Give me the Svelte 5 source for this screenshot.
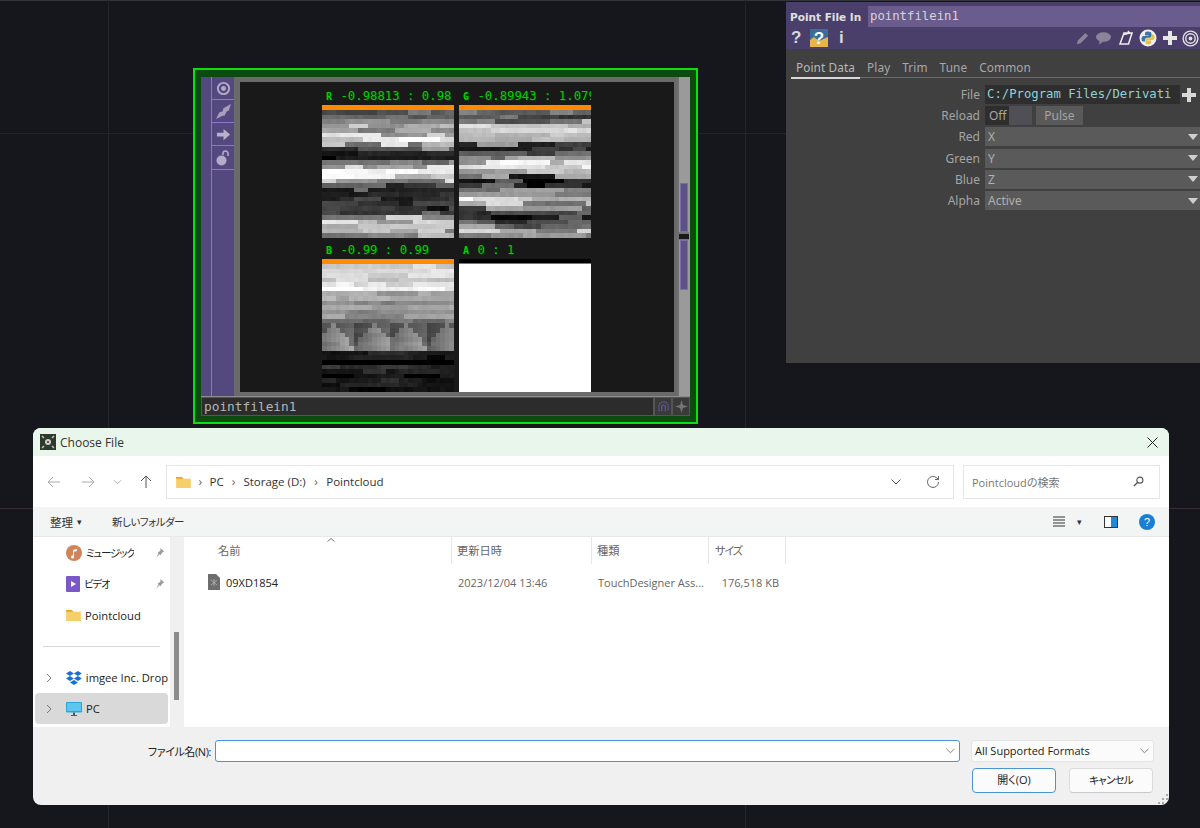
<script>
  function rng(seed) {
    let s = seed;
    return () => {
      s = (s * 1664525 + 1013904223) % 4294967296;
      return s / 4294967296;
    };
  }
  const profiles = {
    r: [85,105,140,205,130,150,235,190,70,50,15,115,140,235,245,165,110,30,35,55,70,30,70,130,210,180,200,130],
    g: [110,70,120,190,210,170,190,50,30,90,140,225,245,170,110,15,40,110,160,230,190,110,60,30,100,80,200,140],
    b: [215,230,215,205,225,245,165,170,140,165,135,150,115,90,110,115,105,120,70,32,22,8,40,38,12,30,20,10]
  };
  const shifts = [-1, 0, 0, 0, 1];
  function cells(key, seed) {
    const p = profiles[key];
    const r = rng(seed);
    const out = [];
    for (let y = 0; y < p.length; y++) {
      let x = 0;
      const amp = key === 'b' ? 20 : 24;
      while (x < 29) {
        const len = 3 + Math.floor(r() * 7);
        const jitter = (r() - 0.5) * 2 * amp;
        const shift = key === 'b' ? 0 : shifts[Math.floor(r() * shifts.length)];
        const idx = Math.max(0, Math.min(p.length - 1, y + shift));
        for (let i = 0; i < len && x < 29; i++, x++) {
          let v = p[idx] * 0.75 + p[y] * 0.25 + jitter + (r() - 0.5) * 10;
          if (key === 'b' && y > 12 && y < 19) {
            const m = (x + 2 + (x > 14 ? 2 : 0)) % 9;
            const inside = Math.abs(m - 4) <= (y - 12) * 0.75;
            v = (inside ? 100 + m * 8 : 72 + m * 4) + jitter * 0.4;
          }
          v = Math.max(0, Math.min(255, Math.round(v)));
          out.push({ x, y, fill: `rgb(${v},${v},${v})` });
        }
      }
    }
    return out;
  }
  const tiles = [
    { label: 'R', range: '-0.98813 : 0.98', cells: cells('r', 11) },
    { label: 'G', range: '-0.89943 : 1.079', cells: cells('g', 29) },
    { label: 'B', range: '-0.99 : 0.99', cells: cells('b', 53) },
    { label: 'A', range: '0 : 1', cells: null }
  ];
  const params = [
    ['Red', 'X'], ['Green', 'Y'], ['Blue', 'Z'], ['Alpha', 'Active']
  ];
</script>

<div class="desk">
  <div class="line h0"></div>
  <div class="line h1"></div>
  <div class="line h2"></div>
  <div class="line v1"></div>
  <div class="line v2"></div>

  <section class="node">
    <div class="node-body">
      <aside class="side">
        <div class="side-strip"></div>
        <div class="side-btns">
          <button class="sb"><svg viewBox="0 0 16 16" width="15" height="15"><circle cx="8" cy="8" r="6" fill="none" stroke="#b3abc9" stroke-width="2"/><circle cx="8" cy="8" r="2.6" fill="#b3abc9"/></svg></button>
          <button class="sb"><svg viewBox="0 0 16 16" width="17" height="17"><path d="M15 1 L8 5 L7 8 L4 9 L1 15 L7 12 L9 12 L11 8 L13 7Z" fill="#a79fbd"/></svg></button>
          <button class="sb"><svg viewBox="0 0 16 16" width="15" height="15"><path d="M1 6h7V2l7 6-7 6v-4H1z" fill="#b8b2c9"/></svg></button>
          <button class="sb last"><svg viewBox="0 0 16 16" width="16" height="16"><circle cx="6.5" cy="10.5" r="5" fill="#b3abc9"/><path d="M8 5V3.5a2.5 2.5 0 0 1 5 0V6" fill="none" stroke="#b3abc9" stroke-width="1.6"/></svg></button>
        </div>
      </aside>
      <div class="viewer">
        <div class="tiles">
          {#each tiles as t}
            <div class="tile">
              <div class="tile-label"><b>{t.label}</b> {t.range}</div>
              {#if t.cells}
                <div class="bar"></div>
                <svg class="heat" viewBox="0 0 29 28" preserveAspectRatio="none" shape-rendering="crispEdges">
                  {#each t.cells as c}<rect x={c.x} y={c.y} width="1.02" height="1.02" fill={c.fill}/>{/each}
                </svg>
              {:else}
                <div class="bar black"></div>
                <div class="white"></div>
              {/if}
            </div>
          {/each}
        </div>
      </div>
      <div class="scroll">
        <div class="s-top"></div>
        <div class="s-thumb t1"></div>
        <div class="s-sep"></div>
        <div class="s-thumb t2"></div>
      </div>
    </div>
    <div class="node-foot">
      <div class="node-name">pointfilein1</div>
      <div class="foot-btn"><svg viewBox="0 0 12 12" width="11" height="11"><path d="M1 11V6a5 5 0 0 1 10 0v5" fill="none" stroke="#5d5490" stroke-width="2" stroke-dasharray="1.5 1"/><path d="M4 11V6.500a2 2 0 0 1 4 0V11" fill="none" stroke="#5d5490" stroke-width="1.5"/></svg></div>
      <div class="foot-btn"><svg viewBox="0 0 14 14" width="13" height="13"><path d="M7 0l1.500 5.500L14 7l-5.500 1.500L7 14l-1.500-5.500L0 7l5.500-1.500z" fill="#757575"/></svg></div>
    </div>
  </section>

  <section class="panel">
    <header class="p-head">
      <div class="p-title">
        <span class="p-type">Point File In</span>
        <span class="p-name">pointfilein1</span>
      </div>
      <div class="p-icons">
        <span class="q">?</span>
        <svg class="qq" viewBox="0 0 18 18" width="18" height="18"><rect width="18" height="18" fill="#3c6d96"/><path d="M0 11l4-3 5 4 9-4v10H0z" fill="#e8b44c"/><text x="9" y="15" text-anchor="middle" font-size="17" font-weight="700" font-family="Liberation Sans" fill="#fff">?</text></svg>
        <span class="q i">i</span>
        <span class="grow"></span>
        <svg viewBox="0 0 16 16" width="15" height="15"><path d="M2 14l1-4 8-8 3 3-8 8z" fill="#8d8398"/></svg>
        <svg viewBox="0 0 18 14" width="17" height="14"><ellipse cx="9" cy="6" rx="8" ry="5" fill="#8d8398"/><path d="M5 10l-1 4 5-3z" fill="#8d8398"/></svg>
        <svg viewBox="0 0 16 16" width="16" height="16"><path d="M6 3h8L10.500 14H2z" fill="none" stroke="#f0f0f0" stroke-width="1.500"/><path d="M6 4.500l5.500-1.500L10 1" fill="none" stroke="#f0f0f0" stroke-width="1.500"/></svg>
        <svg viewBox="0 0 18 18" width="18" height="18"><circle cx="9" cy="9" r="8.500" fill="#f0f0f0"/><path d="M9 2.500c-3 0-3 1.300-3 2.500v1.500h3.500V7H4.500C3 7 2.500 8.500 2.500 10s.5 2.500 2 2.500H6V11c0-1.300 1-2.300 2.300-2.300h2.500c1 0 1.700-.8 1.700-1.700V4.700C12.500 3.300 11 2.500 9 2.500z" fill="#3a76a8"/><path d="M9 15.500c3 0 3-1.300 3-2.500v-1.500H8.500V11H13.500c1.500 0 2-1.500 2-3s-.5-2.500-2-2.500H13V7c0 1.300-1 2.300-2.300 2.300H8.200c-1 0-1.700.8-1.700 1.700v2.300c0 1.400 1.500 2.200 2.500 2.200z" fill="#e8c23e"/></svg>
        <svg viewBox="0 0 14 14" width="14" height="14"><path d="M5 0h4v5h5v4H9v5H5V9H0V5h5z" fill="#e6e6e6"/></svg>
        <svg viewBox="0 0 18 18" width="17" height="17"><circle cx="9" cy="9" r="7.800" fill="none" stroke="#e0e0e0" stroke-width="1.500"/><circle cx="9" cy="9" r="5" fill="none" stroke="#e0e0e0" stroke-width="1.500"/><circle cx="9" cy="9" r="2" fill="#e0e0e0"/></svg>
      </div>
    </header>
    <nav class="tabs">
      <span class="tab active">Point Data</span>
      <span class="tab">Play</span>
      <span class="tab">Trim</span>
      <span class="tab">Tune</span>
      <span class="tab">Common</span>
    </nav>
    <div class="form">
      <div class="row">
        <label>File</label>
        <div class="file-val">C:/Program Files/Derivati</div>
        <svg class="plus" viewBox="0 0 14 14" width="14" height="14"><path d="M5 0h4v5h5v4H9v5H5V9H0V5h5z" fill="#d8d8d8"/></svg>
      </div>
      <div class="row">
        <label>Reload</label>
        <div class="off">Off</div>
        <div class="swatch"></div>
        <div class="pulse">Pulse</div>
      </div>
      {#each params as p}
        <div class="row">
          <label>{p[0]}</label>
          <div class="sel"><span>{p[1]}</span><svg viewBox="0 0 10 6" width="10" height="6"><path d="M0 0h10L5 6z" fill="#cfcfcf"/></svg></div>
        </div>
      {/each}
    </div>
  </section>

  <section class="dialog">
    <div class="d-title">
      <svg viewBox="0 0 16 16" width="16" height="16"><rect width="16" height="16" fill="#2e3a2a"/><circle cx="8" cy="8" r="3" fill="#cfcfcf"/><circle cx="8" cy="8" r="1" fill="#333"/><path d="M2 2l2 2M14 2l-2 2M2 14l2-2M14 14l-2-2" stroke="#bfc7b8" stroke-width="1.500"/></svg>
      <span class="d-title-t">Choose File</span>
      <span class="grow"></span>
      <svg class="x" viewBox="0 0 11 11" width="11" height="11"><path d="M.5.500l10 10M10.500.500l-10 10" stroke="#222" stroke-width="1"/></svg>
    </div>
    <div class="d-nav">
      <div class="nav-btns">
        <svg viewBox="0 0 14 12" width="14" height="12"><path d="M13 6H1M6 1L1 6l5 5" fill="none" stroke="#aaa" stroke-width="1"/></svg>
        <svg viewBox="0 0 14 12" width="14" height="12"><path d="M1 6h12M8 1l5 5-5 5" fill="none" stroke="#aaa" stroke-width="1"/></svg>
        <svg class="nd" viewBox="0 0 10 6" width="9" height="6"><path d="M1 1l4 4 4-4" fill="none" stroke="#aaa" stroke-width="1"/></svg>
        <svg class="nu" viewBox="0 0 12 14" width="12" height="14"><path d="M6 13V1M1 6l5-5 5 5" fill="none" stroke="#555" stroke-width="1"/></svg>
      </div>
      <div class="addr">
        <svg viewBox="0 0 16 13" width="15" height="12"><path d="M0 1h6l2 2h8v10H0z" fill="#f7cf6a"/><path d="M0 1h6l2 2H0z" fill="#eaa520"/></svg>
        <span class="crumb-s first">›</span><span>PC</span><span class="crumb-s second">›</span><span>Storage (D:)</span><span class="crumb-s">›</span><span>Pointcloud</span>
        <span class="grow"></span>
        <svg class="ac" viewBox="0 0 10 6" width="10" height="6"><path d="M.5.500L5 5 9.500.500" fill="none" stroke="#555" stroke-width="1"/></svg>
        <svg class="rf" viewBox="0 0 14 14" width="14" height="14"><path d="M12.500 7a5.500 5.500 0 1 1-1.600-3.900L12.500 4.500M12.500 1v3.500H9" fill="none" stroke="#666" stroke-width="1"/></svg>
      </div>
      <div class="search">
        <span>Pointcloudの検索</span>
        <span class="grow"></span>
        <svg viewBox="0 0 12 12" width="11" height="11"><circle cx="7.500" cy="4.500" r="3.300" fill="none" stroke="#555" stroke-width="1.200"/><path d="M5 7l-4 4" stroke="#555" stroke-width="1.500"/></svg>
      </div>
    </div>
    <div class="d-tools">
      <span class="t-org">整理</span><span class="caret">▾</span>
      <span class="t-new">新しいフォルダー</span>
      <span class="grow"></span>
      <svg viewBox="0 0 12 11" width="12" height="11"><path d="M0 1h12M0 4h12M0 7h12M0 10h12" stroke="#333" stroke-width="1"/></svg>
      <span class="caret c2">▾</span>
      <svg class="pv" viewBox="0 0 14 12" width="14" height="12"><rect x=".5" y=".5" width="13" height="11" fill="#fff" stroke="#333"/><rect x="7" y="1" width="6" height="10" fill="#1f8ad6"/></svg>
      <svg class="hp" viewBox="0 0 16 16" width="16" height="16"><circle cx="8" cy="8" r="8" fill="#1a7fd4"/><text x="8" y="12" text-anchor="middle" font-size="11" font-family="Liberation Sans" fill="#fff">?</text></svg>
    </div>
    <div class="d-main">
      <aside class="tree">
        <div class="t-row">
          <svg viewBox="0 0 16 16" width="16" height="16"><circle cx="8" cy="8" r="8" fill="#d0845a"/><path d="M7 12V5l4-1v2l-3 .8V12a1.500 1.500 0 1 1-1-1.400z" fill="#fff"/></svg>
          <span class="t-l kana">ミュージック</span>
          <svg class="pin" viewBox="0 0 12 12" width="11" height="11"><path d="M7 1l4 4-2 1-2 3-1-1-4 4 3-5-1-1 3-2z" fill="#9a9a9a"/></svg>
        </div>
        <div class="t-row">
          <svg viewBox="0 0 14 16" width="14" height="16"><rect width="14" height="16" rx="1" fill="#7a58c8"/><path d="M5 5l5 3-5 3z" fill="#fff"/></svg>
          <span class="t-l kana">ビデオ</span>
          <svg class="pin" viewBox="0 0 12 12" width="11" height="11"><path d="M7 1l4 4-2 1-2 3-1-1-4 4 3-5-1-1 3-2z" fill="#9a9a9a"/></svg>
        </div>
        <div class="t-row tall">
          <svg viewBox="0 0 16 13" width="15" height="12"><path d="M0 1h6l2 2h8v10H0z" fill="#f7cf6a"/><path d="M0 1h6l2 2H0z" fill="#eaa520"/></svg>
          <span class="t-l">Pointcloud</span>
        </div>
        <div class="t-div"></div>
        <div class="t-row exp">
          <svg class="chev" viewBox="0 0 6 10" width="6" height="10"><path d="M1 1l4 4-4 4" fill="none" stroke="#777"/></svg>
          <svg viewBox="0 0 16 14" width="16" height="14"><path d="M4 0l4 2.500L4 5 0 2.500zM12 0l4 2.500L12 5 8 2.500zM4 5l4 2.500L4 10 0 7.500zM12 5l4 2.500L12 10 8 7.500zM8 9l4 2.500L8 14l-4-2.500z" fill="#1a70d0"/></svg>
          <span class="t-l clip">imgee Inc. Drop</span>
        </div>
        <div class="t-row exp sel-row">
          <svg class="chev" viewBox="0 0 6 10" width="6" height="10"><path d="M1 1l4 4-4 4" fill="none" stroke="#777"/></svg>
          <svg viewBox="0 0 16 14" width="16" height="14"><rect width="16" height="10.500" rx="1" fill="#2aa5dc"/><rect x="1" y="1" width="14" height="8" fill="#5cc6ee"/><path d="M5 14h6v-1H9v-2.500H7V13H5z" fill="#4a5a6a"/></svg>
          <span class="t-l">PC</span>
        </div>
      </aside>
      <div class="vs"><div class="vs-t"></div></div>
      <div class="files">
        <div class="f-head">
          <span class="c1">名前<svg class="sort" viewBox="0 0 8 4" width="8" height="4"><path d="M.5 3.500L4 .5l3.500 3" fill="none" stroke="#777"/></svg></span>
          <span class="c2h">更新日時</span>
          <span class="c2h">種類</span>
          <span class="c2h sz">サイズ</span>
        </div>
        <div class="f-row">
          <span class="fn"><svg viewBox="0 0 12 16" width="12" height="16"><path d="M0 0h8l4 4v12H0z" fill="#6e6e6e"/><path d="M3 6l6 5M9 6l-6 5M6 5v7" stroke="#b5b5b5" stroke-width=".8"/></svg>09XD1854</span>
          <span>2023/12/04 13:46</span>
          <span>TouchDesigner Ass...</span>
          <span class="fs">176,518 KB</span>
        </div>
      </div>
    </div>
    <div class="d-foot">
      <div class="fl1">
        <span class="fl-lab">ファイル名(N):</span>
        <div class="fl-in"><svg viewBox="0 0 10 6" width="9" height="6"><path d="M.5.500L5 5 9.500.500" fill="none" stroke="#777"/></svg></div>
        <div class="fl-cb"><span>All Supported Formats</span><svg viewBox="0 0 10 6" width="9" height="6"><path d="M.5.500L5 5 9.500.500" fill="none" stroke="#777"/></svg></div>
      </div>
      <div class="fl2">
        <div class="btn prim">開く(O)</div>
        <div class="btn cancel">キャンセル</div>
      </div>
      <svg class="grip" viewBox="0 0 10 10" width="10" height="10"><path d="M8 0h2v2H8zM4 4h2v2H4zM8 4h2v2H8zM0 8h2v2H0zM4 8h2v2H4zM8 8h2v2H8z" fill="#aaa"/></svg>
    </div>
  </section>
</div>

<style>
  :global(body) { margin: 0; background: #16171c; }
  .desk { position: relative; width: 1200px; height: 828px; overflow: hidden; background: #16171c; font-family: "Open Sans", "Noto Sans CJK JP", sans-serif; }
  .line { position: absolute; background: #24252b; }
  .h0 { left: 0; right: 0; top: 0; height: 1px; background: #33343a; }
  .h1 { left: 0; right: 0; top: 133px; height: 1px; }
  .h2 { left: 0; right: 0; top: 508px; height: 1px; background: #3a2a3a; }
  .v1 { left: 108px; top: 0; bottom: 0; width: 1px; }
  .v2 { left: 745px; top: 0; bottom: 0; width: 1px; }
  .grow { flex: 1; }
  button { all: unset; box-sizing: border-box; }

  .node { position: absolute; left: 193px; top: 68px; width: 505px; height: 356px; box-sizing: border-box; border: 2px solid #0fdc12; background: #0c4a10; padding: 7px 6px 6px 6px; display: flex; flex-direction: column; }
  .node-body { flex: 1; display: flex; min-height: 0; }
  .side { width: 33px; display: flex; background: #54497f; }
  .side-strip { width: 10px; border-right: 1px solid #8a78cc; }
  .side-btns { flex: 1; display: flex; flex-direction: column; }
  .sb { height: 23px; width: 22px; display: flex; align-items: center; justify-content: center; border-bottom: 1px solid #8a78cc; }
  .sb.last { height: 24px; }
  .viewer { flex: 1; background: #191919; border: solid #6a6a6a; border-width: 5px 3px 4px 6px; box-sizing: border-box; overflow: hidden; }
  .tiles { margin-left: 82px; width: 269px; display: grid; grid-template-columns: 132px 132px; column-gap: 5px; row-gap: 0; padding-top: 5px; }
  .tile { height: 153.500px; display: flex; flex-direction: column; overflow: hidden; }
  .tile-label { height: 18px; font: 12.300px/19px "DejaVu Sans Mono", monospace; color: #00d000; text-shadow: 1px 1px 0 #0a3a0a; padding-left: 4px; white-space: nowrap; overflow: hidden; }
  .tile-label b { font-size: 10px; margin-right: 1px; }
  .bar { height: 5px; background: #ff8a00; flex: none; }
  .bar.black { background: #000; border-bottom: 1px solid #777; height: 5px; box-sizing: border-box; }
  .heat { display: block; width: 132px; height: 128px; flex: none; }
  .white { background: #fff; flex: 1; }
  .scroll { width: 13px; background: #9a9a9a; border-left: 2px solid #6f6f6f; box-sizing: border-box; display: flex; flex-direction: column; padding: 0 2px 0 1px; }
  .s-top { height: 106px; }
  .s-thumb { background: #5d5285; border: 1px solid #7a6fa5; box-sizing: border-box; }
  .t1 { height: 49px; }
  .s-sep { height: 8px; margin: 0 -1px; background: #191919; border-top: 2px solid #777; border-bottom: 1px solid #777; box-sizing: border-box; }
  .t2 { height: 50px; }
  .node-foot { height: 20px; display: flex; background: #555; gap: 2px; border-top: 1px solid #8b8b8b; box-sizing: border-box; padding: 1px; }
  .node-name { flex: 1; background: #2c2c2c; color: #b5b5b5; font: 12.800px/17px "DejaVu Sans Mono", monospace; padding-left: 2px; }
  .foot-btn { width: 16px; display: flex; align-items: center; justify-content: center; background: #3a3a3a; }

  .panel { position: absolute; left: 786px; top: 2px; width: 414px; height: 361px; background: #404040; color: #a8a8a8; font-family: "Noto Sans", sans-serif; }
  .p-head { background: #4a3f6b; height: 47px; display: flex; flex-direction: column; }
  .p-title { display: flex; align-items: center; height: 25px; padding-top: 4px; box-sizing: border-box; }
  .p-type { font: 700 10.500px "DejaVu Sans", sans-serif; color: #e0e0e0; padding-left: 4px; width: 78px; white-space: nowrap; }
  .p-name { flex: 1; align-self: stretch; background: #6a5c8c; color: #d5d5d5; font: 12.300px/20px "DejaVu Sans Mono", monospace; padding-left: 2px; }
  .p-icons { flex: 1; display: flex; align-items: center; gap: 5.500px; padding: 0 1px 0 5px; }
  .q { font: 700 17px "Liberation Sans", sans-serif; color: #d8d8d8; width: 12px; }
  .qq { margin-left: 1px; }
  .i { margin-left: 6px; width: 8px; }
  .tabs { display: flex; gap: 12px; margin: 9px 0 0 5px; height: 19px; border-bottom: 1px solid #6b6b6b; font-size: 11.800px; line-height: 18px; }
  .tab { color: #a8a8a8; letter-spacing: .1px; }
  .tab.active { box-shadow: 0 2px 0 #d8d8d8; padding: 0 5px; margin-right: -5px; color: #b8b8b8; }
  .form { padding-top: 6.800px; display: flex; flex-direction: column; gap: 2.300px; }
  .row { display: flex; align-items: stretch; height: 19px; font-size: 12px; line-height: 19px; }
  .row label { width: 194px; text-align: right; padding-right: 5px; color: #a5a5a5; }
  .file-val { width: 195px; background: #2e2e2e; color: #8fd3d6; font: 12.250px/19px "DejaVu Sans Mono", monospace; padding-left: 2px; box-sizing: border-box; }
  .plus { margin: 3px 0 0 2px; }
  .off { width: 24px; background: #2e2e2e; padding-left: 4px; box-sizing: border-box; color: #a5a5a5; }
  .swatch { width: 23px; background: #4f4f55; }
  .pulse { margin-left: 4px; width: 47px; background: #595959; text-align: center; color: #a5a5a5; }
  .sel { flex: 1; background: #5a5a5a; display: flex; align-items: center; justify-content: space-between; padding: 0 2px 0 3px; color: #b0b0b0; }

  .dialog { position: absolute; left: 33px; top: 428px; width: 1136px; height: 377px; border-radius: 8px; overflow: hidden; background: #f0f0f0; display: flex; flex-direction: column; color: #222; font-size: 11.500px; font-family: "Open Sans", "Noto Sans CJK JP", sans-serif; font-feature-settings: "palt"; }
  .d-title { height: 28px; background: #e8f6ec; display: flex; align-items: center; padding: 0 11px 0 7px; flex: none; }
  .d-title-t { margin-left: 4px; font-size: 12px; color: #333; }
  .d-nav { height: 51px; background: #fff; display: flex; align-items: center; flex: none; }
  .nav-btns { width: 133px; display: flex; align-items: center; padding-left: 14px; box-sizing: border-box; }
  .nav-btns svg:nth-child(2) { margin-left: 20px; }
  .nd { margin-left: 18px; }
  .nu { margin-left: 18px; }
  .addr { width: 788px; height: 34px; border: 1px solid #e6e6e6; box-sizing: border-box; display: flex; align-items: center; padding: 0 13px 0 9px; gap: 6px; color: #333; }
  .crumb-s { color: #666; font-size: 12px; margin: 0 2.500px; }
  .crumb-s.first { margin: 0 1.500px; }
  .crumb-s.second { margin: 0 2px; }
  .ac { margin-right: 19px; }
  .search { margin-left: 9px; width: 197px; height: 34px; border: 1px solid #e6e6e6; box-sizing: border-box; display: flex; align-items: center; padding: 0 15px 0 8px; color: #777; font-size: 11px; }
  .d-tools { height: 30px; background: #f3f4f4; border-bottom: 1px solid #e8e8e8; box-sizing: border-box; display: flex; align-items: center; padding: 0 14px 0 17px; flex: none; color: #333; font-size: 11.500px; }
  .caret { font-size: 9px; margin-left: 4px; color: #333; }
  .t-new { margin-left: 30px; font-size: 10.500px; letter-spacing: -.5px; }
  .c2 { margin: 0 0 0 12px; color: #334; }
  .pv { margin-left: 22px; }
  .hp { margin-left: 21px; }
  .d-main { height: 190px; background: #fff; display: flex; flex: none; }
  .tree { width: 137px; box-sizing: border-box; display: flex; flex-direction: column; color: #222; font-size: 11.200px; }
  .t-row { height: 31px; display: flex; align-items: center; padding-left: 33px; gap: 4px; position: relative; flex: none; }
  .t-row.tall { height: 32px; }
  .pin { position: absolute; right: 5px; top: 10px; }
  .t-div { height: 1px; background: #d9d9d9; margin: 15px 10px 15px 10px; flex: none; }
  .exp { padding-left: 11px; margin: 0 2px; border-radius: 4px; }
  .chev { margin-right: 10px; }
  .sel-row { background: #d9d9d9; }
  .clip { white-space: nowrap; overflow: hidden; }
  .t-l { flex: none; max-width: 92px; overflow: hidden; white-space: nowrap; }
  .kana { font-size: 10.500px; letter-spacing: -1.200px; }
  .vs { width: 14px; background: #f0f0f0; padding-top: 95px; box-sizing: border-box; }
  .vs-t { width: 5px; height: 68px; margin-left: 4px; background: #8c8c8c; }
  .files { flex: 1; }
  .f-head, .f-row { display: grid; grid-template-columns: 268px 140px 117px 77px; }
  .f-head { height: 27px; align-items: stretch; color: #666; font-size: 11.250px; line-height: 27px; }
  .f-head span { border-right: 1px solid #e6e6e6; padding-left: 5px; position: relative; }
  .f-head .c1 { padding-left: 34px; }
  .f-head .sz { padding-left: 6px; letter-spacing: -1.300px; }
  .sort { position: absolute; left: 143px; top: 1px; }
  .f-row { height: 36px; align-items: center; color: #666; font-size: 11px; }
  .f-row span { padding-left: 6px; white-space: nowrap; overflow: hidden; }
  .f-row .fn { display: flex; align-items: center; gap: 6px; padding-left: 24px; color: #222; font-size: 11px; }
  .f-row .fs { text-align: right; padding-right: 7px; }
  .d-foot { flex: 1; position: relative; display: flex; flex-direction: column; padding-top: 13px; box-sizing: border-box; }
  .fl1 { display: flex; align-items: center; height: 22px; }
  .fl-lab { width: 180px; text-align: right; padding-right: 2px; box-sizing: border-box; font-size: 11px; color: #222; letter-spacing: -.4px; }
  .fl-in { margin-left: 2px; width: 745px; height: 22px; background: #fff; border: 1px solid #4a95d6; border-radius: 3px; box-sizing: border-box; display: flex; align-items: center; justify-content: flex-end; padding-right: 4px; }
  .fl-cb { margin-left: 11px; width: 183px; height: 22px; background: #fbfbfb; border: 1px solid #e4e4e4; border-radius: 3px; box-sizing: border-box; display: flex; align-items: center; justify-content: space-between; padding: 0 4px 0 3px; font-size: 11px; line-height: 18px; }
  .fl2 { display: flex; margin: 6px 0 0 939px; gap: 13px; }
  .btn { width: 84px; height: 25px; background: #fbfbfb; border: 1px solid #dcdcdc; border-bottom-color: #c8c8c8; border-radius: 4px; box-sizing: border-box; text-align: center; line-height: 22px; font-size: 11px; }
  .cancel { font-size: 10.500px; letter-spacing: -.8px; }
  .prim { border: 1px solid #4a95d6; }
  .grip { position: absolute; right: 1px; bottom: 1px; }
</style>
